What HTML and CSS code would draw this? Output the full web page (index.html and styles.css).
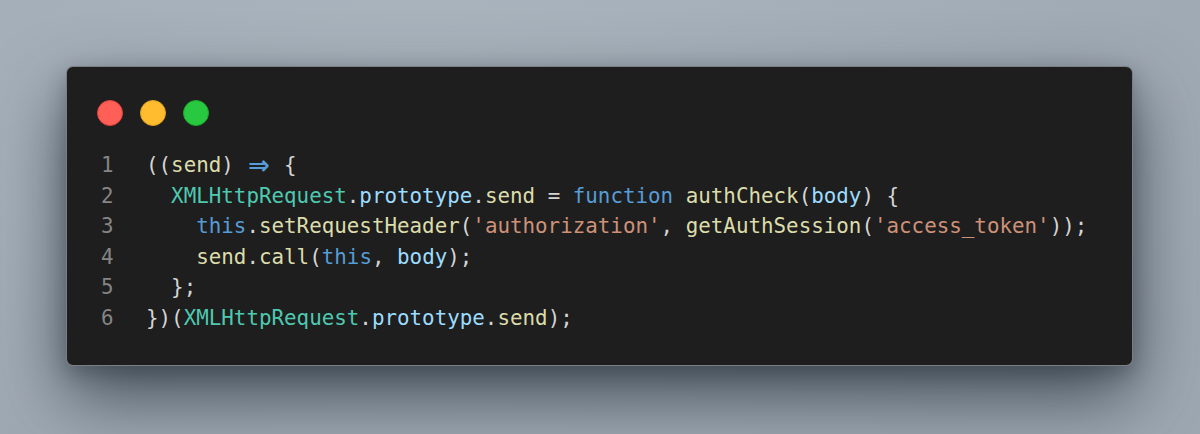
FILE: index.html
```html
<!DOCTYPE html>
<html lang="en">
<head>
<meta charset="utf-8">
<title>Code snippet</title>
<link rel="stylesheet" href="styles.css">
</head>
<body>
<div class="stage">
  <div class="window">
    <div class="dots">
      <span class="dot red"></span>
      <span class="dot yellow"></span>
      <span class="dot green"></span>
    </div>
    <div class="code">
      <div class="line"><span class="ln">1</span><span class="src"><span class="p">((</span><span class="fn">send</span><span class="p">) </span><span class="kw arrow">⇒</span><span class="p"> {</span></span></div>
      <div class="line"><span class="ln">2</span><span class="src">  <span class="ty">XMLHttpRequest</span><span class="p">.</span><span class="var">prototype</span><span class="p">.</span><span class="fn">send</span><span class="p"> = </span><span class="kw">function</span><span class="p"> </span><span class="fn">authCheck</span><span class="p">(</span><span class="var">body</span><span class="p">) {</span></span></div>
      <div class="line"><span class="ln">3</span><span class="src">    <span class="kw">this</span><span class="p">.</span><span class="fn">setRequestHeader</span><span class="p">(</span><span class="str">'authorization'</span><span class="p">, </span><span class="fn">getAuthSession</span><span class="p">(</span><span class="str">'access_token'</span><span class="p">));</span></span></div>
      <div class="line"><span class="ln">4</span><span class="src">    <span class="fn">send</span><span class="p">.</span><span class="fn">call</span><span class="p">(</span><span class="kw">this</span><span class="p">, </span><span class="var">body</span><span class="p">);</span></span></div>
      <div class="line"><span class="ln">5</span><span class="src">  <span class="p">};</span></span></div>
      <div class="line"><span class="ln">6</span><span class="src"><span class="p">})(</span><span class="ty">XMLHttpRequest</span><span class="p">.</span><span class="var">prototype</span><span class="p">.</span><span class="fn">send</span><span class="p">);</span></span></div>
    </div>
  </div>
</div>
</body>
</html>
```

FILE: styles.css
```css
html, body {
  margin: 0;
  padding: 0;
}

body {
  width: 1200px;
  height: 434px;
  overflow: hidden;
  background: radial-gradient(ellipse 900px 420px at 35% 20%, #abb5be 0%, #a4aeb8 55%, #9ea8b2 100%);
}

.stage {
  padding: 66px 67px 0 66px;
}

.window {
  width: 1067px;
  height: 300px;
  box-sizing: border-box;
  background: #1e1e1e;
  border: 1px solid rgba(200, 208, 216, 0.55);
  border-radius: 7px;
  box-shadow: 0 30px 70px rgba(35, 45, 55, 0.75), 0 8px 20px rgba(30, 38, 46, 0.3);
  padding: 33px 0 0 30px;
}

.dots {
  display: flex;
  gap: 17px;
  height: 26px;
}

.dot {
  width: 26px;
  height: 26px;
  border-radius: 50%;
  box-sizing: border-box;
}

.red { background: #ff5f57; border: 1px solid #e0443e; }
.yellow { background: #febc2e; border: 1px solid #dea123; }
.green { background: #28c840; border: 1px solid #1aab29; }

.code {
  margin-top: 24px;
  margin-left: 4px;
  font-family: "DejaVu Sans Mono", "Liberation Mono", monospace;
  font-size: 20.85px;
  line-height: 30.6px;
  color: #d4d4d4;
}

.line {
  display: flex;
  white-space: pre;
}

.ln {
  width: 45px;
  flex: none;
  color: #858585;
}

.arrow {
  display: inline-block;
  width: 25.1px;
  text-align: center;
  font-family: "DejaVu Sans", sans-serif;
  font-size: 26px;
  line-height: 30.6px;
  vertical-align: top;
  font-weight: bold;
}

.p { color: #d4d4d4; }
.fn { color: #dcdcaa; }
.kw { color: #569cd6; }
.ty { color: #4ec9b0; }
.var { color: #9cdcfe; }
.str { color: #ce9178; }
```
